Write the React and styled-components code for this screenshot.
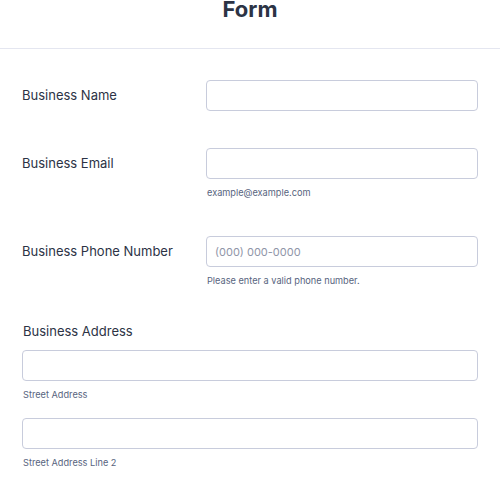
import React from "react";
import styled, { createGlobalStyle } from "styled-components";

const GlobalStyle = createGlobalStyle`
  html, body {
    margin: 0;
    padding: 0;
    background: #fff;
    font-family: Inter, "Noto Sans", sans-serif;
    color: #2c3345;
    overflow: hidden;
  }
  * {
    box-sizing: border-box;
  }
`;

const Page = styled.div`
  width: 500px;
  height: 484px;
  overflow: hidden;
  background: #fff;
`;

const Header = styled.header`
  height: 49px;
  display: flex;
  justify-content: center;
  align-items: flex-start;
  border-bottom: 1px solid #e4e6f0;
`;

const Title = styled.h1`
  margin: -4px 0 0;
  font-size: 22px;
  line-height: 26px;
  font-weight: 700;
  color: #2c3345;
`;

const Body = styled.form`
  display: flex;
  flex-direction: column;
  padding: 31px 22px 0;
`;

const Row = styled.div`
  display: grid;
  grid-template-columns: 184px 1fr;
  align-items: start;
  margin-bottom: ${(p) => p.gap || 37}px;
`;

const Label = styled.label`
  font-size: 13px;
  line-height: 31px;
  font-weight: 400;
  color: #2c3345;
`;

const BlockLabel = styled.label`
  display: block;
  padding-left: 1px;
  font-size: 13px;
  line-height: 18px;
  font-weight: 400;
  color: #2c3345;
  margin-bottom: 10px;
`;

const Field = styled.div`
  display: flex;
  flex-direction: column;
`;

const TextInput = styled.input`
  width: 100%;
  height: 31px;
  padding: 0 8px;
  border: 1px solid #c8ccdc;
  border-radius: 4px;
  background: #fff;
  font-family: Inter, "Noto Sans", sans-serif;
  font-size: 11px;
  color: #2c3345;
  outline: none;

  &::placeholder {
    color: #8f95a8;
  }
`;

const Sub = styled.span`
  margin-top: 6px;
  padding-left: 1px;
  font-size: 9.2px;
  line-height: 15px;
  color: #57647e;
`;

const AddressBlock = styled.div`
  display: flex;
  flex-direction: column;
  gap: 16px;
`;

export default function App() {
  return (
    <Page>
      <GlobalStyle />
      <Header>
        <Title>Form</Title>
      </Header>
      <Body>
        <Row>
          <Label>Business Name</Label>
          <Field>
            <TextInput type="text" />
          </Field>
        </Row>
        <Row gap={36}>
          <Label>Business Email</Label>
          <Field>
            <TextInput type="email" />
            <Sub>example@example.com</Sub>
          </Field>
        </Row>
        <Row gap={34}>
          <Label>Business Phone Number</Label>
          <Field>
            <TextInput type="tel" placeholder="(000) 000-0000" />
            <Sub>Please enter a valid phone number.</Sub>
          </Field>
        </Row>
        <div>
          <BlockLabel>Business Address</BlockLabel>
          <AddressBlock>
            <Field>
              <TextInput type="text" />
              <Sub>Street Address</Sub>
            </Field>
            <Field>
              <TextInput type="text" />
              <Sub>Street Address Line 2</Sub>
            </Field>
          </AddressBlock>
        </div>
      </Body>
    </Page>
  );
}
